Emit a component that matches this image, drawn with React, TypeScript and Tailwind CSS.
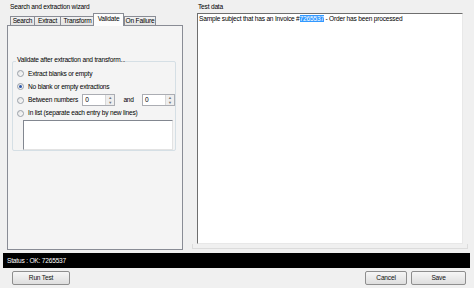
import React from "react";

const tabs = ["Search", "Extract", "Transform", "Validate", "On Failure"];
const tabWidths: Record<string, string> = {
    Search: "w-[24px]",
    Extract: "w-[26px]",
    Transform: "w-[34px]",
    Validate: "w-[31px]",
    "On Failure": "w-[32px]",
};

const Radio = ({checked}: {checked?: boolean}) => (
    <span className="w-[7px] h-[7px] rounded-full border border-[#9aa0a8] bg-gradient-to-br from-[#e4e4e4] to-[#fbfbfb] flex items-center justify-center shrink-0">
        {checked && <span className="w-[3px] h-[3px] rounded-full bg-[#2a55a8]" />}
    </span>
);

const Spin = () => (
    <div className="flex items-center w-[33px] h-[12px] border border-[#abadb3] bg-white shrink-0">
        <span className="flex-1 pl-[2px] leading-none">0</span>
        <div className="w-[9px] h-full flex flex-col border-l border-[#d8d8d8] bg-[#eeeeee]">
            <span className="flex-1 flex items-center justify-center text-[4px] text-[#777] leading-none">▲</span>
            <span className="flex-1 flex items-center justify-center text-[4px] text-[#777] leading-none">▼</span>
        </div>
    </div>
);

const Button = ({label, w}: {label: string; w: string}) => (
    <div className={`${w} h-[14px] flex items-center justify-center border border-[#8e8e8e] rounded-[2px] bg-gradient-to-b from-[#f6f6f6] to-[#dedede] text-[#111]`}>
        {label}
    </div>
);

export default function App() {
    return (
        <div className="w-[474px] h-[288px] bg-[#f0f0f0] text-[6.6px] tracking-[-0.2px] whitespace-nowrap text-[#000] overflow-hidden" style={{fontFamily: "'Liberation Sans', Arial, sans-serif"}}>
            {/* top area */}
            <div className="flex h-[251px]">
                {/* left wizard group */}
                <div className="ml-[4px] w-[182px] flex flex-col">
                    <div className="h-[13px] pl-[6px] pt-[4px] leading-none">Search and extraction wizard</div>
                    <div className="flex items-end h-[13px] pl-[6px] relative z-10">
                        {tabs.map((t) =>
                            t === "Validate" ? (
                                <div key={t} className={`${tabWidths[t]} h-[13px] -ml-[1px] border border-b-0 border-[#898c95] bg-[#fcfcfc] flex items-center justify-center leading-none pb-[1px]`}>
                                    {t}
                                </div>
                            ) : (
                                <div key={t} className={`${tabWidths[t]} h-[10px] border border-[#898c95] border-r-0 last:border-r bg-gradient-to-b from-[#f2f2f2] to-[#e3e3e3] flex items-center justify-center leading-none`}>
                                    {t}
                                </div>
                            )
                        )}
                    </div>
                    <div className="ml-[3px] w-[176px] h-[225px] -mt-[1px] border border-[#898c95] bg-[#f4f4f4] pt-[35px] pl-[4px]">
                        {/* inner validate group */}
                        <div className="relative w-[164px] h-[90px] border border-[#d5dfe5] rounded-[2px] pl-[4px] pt-[5px]">
                            <span className="absolute -top-[5px] left-[3px] bg-[#f4f4f4] px-[1px] leading-none">Validate after extraction and transform...</span>
                            <div className="h-[13px] flex items-center gap-[4px]">
                                <Radio />
                                <span>Extract blanks or empty</span>
                            </div>
                            <div className="h-[13px] flex items-center gap-[4px]">
                                <Radio checked />
                                <span>No blank or empty extractions</span>
                            </div>
                            <div className="h-[14px] flex items-center gap-[4px]">
                                <Radio />
                                <span className="w-[57px]">Between numbers</span>
                                <Spin />
                                <span className="w-[28px] text-center">and</span>
                                <Spin />
                            </div>
                            <div className="h-[12px] flex items-center gap-[4px]">
                                <Radio />
                                <span>In list (separate each entry by new lines)</span>
                            </div>
                            <div className="ml-[6px] mt-[1px] w-[150px] h-[30px] border border-[#828790] border-r-[#e3e3e3] border-b-[#e3e3e3] bg-white" />
                        </div>
                    </div>
                </div>

                {/* right test data group */}
                <div className="ml-[6px] w-[278px] flex flex-col">
                    <div className="h-[13px] pl-[6px] pt-[4px] leading-none">Test data</div>
                    <div className="ml-[5px] w-[266px] h-[231px] border border-[#6e6e6e] border-r-[#e8e8e8] border-b-[#e8e8e8] bg-white pl-[1px] pt-[2px] leading-none">
                        Sample subject that has an Invoice #<span className="bg-[#3399ff] text-white">7265537</span> - Order has been processed
                    </div>
                    <div className="h-[5px] w-[276px] border border-t-0 border-[#dcdcdc]" />
                </div>
            </div>

            {/* status */}
            <div className="ml-[3px] mt-[2px] w-[467px] h-[15px] bg-black text-white flex items-center pl-[4px]">Status : OK: 7265537</div>

            {/* buttons */}
            <div className="flex items-center h-[20px] pb-[1px]">
                <div className="ml-[12px]">
                    <Button label="Run Test" w="w-[58px]" />
                </div>
                <div className="ml-auto mr-[8px] flex gap-[4px]">
                    <Button label="Cancel" w="w-[42px]" />
                    <Button label="Save" w="w-[55px]" />
                </div>
            </div>
        </div>
    );
}
